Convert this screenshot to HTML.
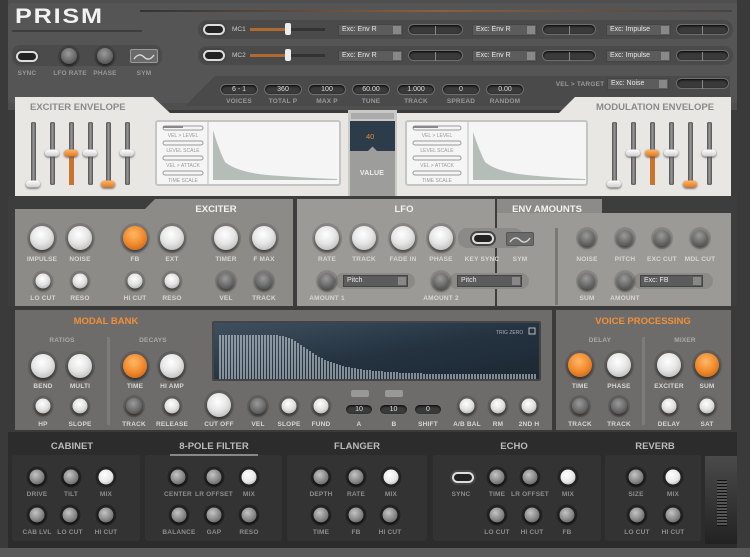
<!DOCTYPE html><html><head><meta charset="utf-8"><style>
*{margin:0;padding:0;box-sizing:border-box}
body{width:750px;height:557px;overflow:hidden;background:#3b3b3b;font-family:"Liberation Sans",sans-serif;position:relative}
div,i,b,span{position:absolute;display:block}
.k{border-radius:50%;transform:translate(-50%,-50%);box-shadow:0 0 0 3px rgba(0,0,0,.12),0 2px 3px rgba(0,0,0,.55)}
.kw{width:24px;height:24px;background:radial-gradient(circle at 45% 35%,#fff,#e6e6e6 45%,#a8a8a8 100%)}
.ko{width:24px;height:24px;background:radial-gradient(circle at 45% 35%,#ffb86a,#f28a2c 50%,#b25a12)}
.ks{width:15px;height:15px;background:radial-gradient(circle at 45% 35%,#fff,#e0e0e0 50%,#9a9a9a)}
.kd{width:16px;height:16px;background:radial-gradient(circle at 45% 35%,#9a9a9a,#6a6a6a 55%,#3e3e3e)}
.kb{width:15px;height:15px;background:radial-gradient(circle at 40% 35%,#c4c4c4,#858585 55%,#4a4a4a);box-shadow:0 0 0 3px rgba(0,0,0,.3),0 1px 2px #000}
.kbw{width:15px;height:15px;background:radial-gradient(circle at 40% 35%,#fff,#e8e8e8 55%,#999);box-shadow:0 0 0 3px rgba(0,0,0,.3)}
.l{transform:translateX(-50%);font-size:6.5px;font-weight:bold;color:#d6d6d4;white-space:nowrap;letter-spacing:.2px}
.ld{color:#8e8e8e}
.t{transform:translateX(-50%);font-size:9.5px;font-weight:bold;color:#f2f2f2;white-space:nowrap}
.or{color:#f0903a}
.pill{height:11px;border-radius:6px;background:#3a3a3a;border:1px solid #6e6e6e;box-shadow:inset 0 1px 2px #000;color:#ddd;font-size:7px;text-align:center;line-height:9px}
.dd{height:12px;background:#5c5c5c;border:1px solid #444;color:#e8e8e8;font-size:7px;line-height:10px;padding-left:3px}
.dd:after{content:"";position:absolute;right:1px;top:1px;width:8px;height:8px;background:#888}
.sync{width:22px;height:11px;border-radius:6px;background:#222;border:2px solid #ddd;box-shadow:0 0 0 2px #444}
.tr{width:5px;height:63px;background:linear-gradient(90deg,#6a6a6a,#999,#6a6a6a);border-radius:2px;box-shadow:inset 0 0 2px #333}
.h{width:14px;height:7px;border-radius:4px;background:linear-gradient(#fff,#ccc);box-shadow:0 1px 2px #555;transform:translate(-50%,-50%)}
.ho{background:linear-gradient(#ffb56a,#e07a20)}
.el{font-size:5.5px;color:#777;transform:translateX(-50%)}
</style></head><body>
<div style="left:0;top:0;width:750px;height:110px;background:#4f4f4f"></div>
<div style="left:8px;top:3px;width:730px;height:100px;background:#555;border-radius:4px"></div>
<div style="left:15px;top:5px;font-size:21px;font-weight:900;color:#f2f2f2;letter-spacing:1.5px;transform:scaleX(1.2);transform-origin:0 0">PRISM</div>
<div style="left:140px;top:10px;width:592px;height:2px;background:linear-gradient(90deg,#333,#8a6040 50%,#444)"></div>
<div style="left:12px;top:30px;width:130px;height:2px;background:#3d3d3d"></div>
<div style="left:198px;top:20px;width:535px;height:19px;background:#4a4a4a;border-radius:9px"></div>
<div style="left:198px;top:46px;width:535px;height:19px;background:#4a4a4a;border-radius:9px"></div>
<i class="sync" style="left:203px;top:24px"></i><i class="sync" style="left:203px;top:50px"></i>
<span style="left:232px;top:26px;font-size:6.5px;color:#ccc">MC1</span><span style="left:232px;top:52px;font-size:6.5px;color:#ccc">MC2</span>
<i style="left:250px;top:28px;width:75px;height:3px;background:linear-gradient(90deg,#b06a30 50%,#333 50%)"></i>
<i style="left:250px;top:54px;width:75px;height:3px;background:linear-gradient(90deg,#b06a30 50%,#333 50%)"></i>
<i style="left:285px;top:23px;width:6px;height:12px;background:#eee;border-radius:2px"></i>
<i style="left:285px;top:49px;width:6px;height:12px;background:#eee;border-radius:2px"></i>
<span class="dd" style="left:338px;top:24px;width:65px">Exc: Env R</span><span class="pill" style="left:408px;top:24px;width:55px"></span>
<span class="dd" style="left:472px;top:24px;width:65px">Exc: Env R</span><span class="pill" style="left:542px;top:24px;width:54px"></span>
<span class="dd" style="left:606px;top:24px;width:65px">Exc: Impulse</span><span class="pill" style="left:676px;top:24px;width:53px"></span>
<span class="dd" style="left:338px;top:50px;width:65px">Exc: Env R</span><span class="pill" style="left:408px;top:50px;width:55px"></span>
<span class="dd" style="left:472px;top:50px;width:65px">Exc: Env R</span><span class="pill" style="left:542px;top:50px;width:54px"></span>
<span class="dd" style="left:606px;top:50px;width:65px">Exc: Impulse</span><span class="pill" style="left:676px;top:50px;width:53px"></span>
<i style="left:435px;top:26px;width:1px;height:9px;background:#888"></i><i style="left:569px;top:26px;width:1px;height:9px;background:#888"></i><i style="left:702px;top:26px;width:1px;height:9px;background:#888"></i>
<i style="left:435px;top:52px;width:1px;height:9px;background:#888"></i><i style="left:569px;top:52px;width:1px;height:9px;background:#888"></i><i style="left:702px;top:52px;width:1px;height:9px;background:#888"></i>
<div style="left:12px;top:45px;width:150px;height:21px;background:#4b4b4b;border-radius:8px"></div>
<i class="sync" style="left:16px;top:51px"></i>
<i class="k kd" style="left:69px;top:56px"></i><i class="k kd" style="left:105px;top:56px"></i>
<i style="left:130px;top:49px;width:28px;height:14px;background:#6a6a6a;border:1px solid #999;border-radius:2px"><svg width="26" height="12"><path d="M3 8 Q8 1 13 6 Q18 11 23 4" stroke="#ddd" stroke-width="1.3" fill="none"/></svg></i>
<b class="l" style="left:27px;top:70px;color:#999">SYNC</b><b class="l" style="left:70px;top:70px;color:#999">LFO RATE</b><b class="l" style="left:105px;top:70px;color:#999">PHASE</b><b class="l" style="left:144px;top:70px;color:#999">SYM</b>
<div style="left:185px;top:76px;width:545px;height:30px;background:#4a4a4a;clip-path:polygon(30px 0,100% 0,100% 100%,0 100%)"></div>
<span class="pill" style="left:220px;top:84px;width:38px">6 - 1</span><span class="pill" style="left:264px;top:84px;width:38px">360</span><span class="pill" style="left:308px;top:84px;width:38px">100</span><span class="pill" style="left:352px;top:84px;width:38px">60.00</span><span class="pill" style="left:397px;top:84px;width:38px">1.000</span><span class="pill" style="left:442px;top:84px;width:38px">0</span><span class="pill" style="left:486px;top:84px;width:38px">0.00</span>
<b class="l" style="left:239px;top:98px;color:#999">VOICES</b><b class="l" style="left:283px;top:98px;color:#999">TOTAL P</b><b class="l" style="left:327px;top:98px;color:#999">MAX P</b><b class="l" style="left:371px;top:98px;color:#999">TUNE</b><b class="l" style="left:416px;top:98px;color:#999">TRACK</b><b class="l" style="left:461px;top:98px;color:#999">SPREAD</b><b class="l" style="left:505px;top:98px;color:#999">RANDOM</b>
<b class="l" style="left:580px;top:81px;color:#999">VEL &gt; TARGET</b>
<span class="dd" style="left:607px;top:78px;width:62px">Exc: Noise</span><span class="pill" style="left:676px;top:78px;width:53px"></span><i style="left:702px;top:80px;width:1px;height:9px;background:#888"></i>
<div style="left:0;top:0;width:8px;height:557px;background:#3a3a3a"></div>
<div style="left:737px;top:0;width:13px;height:557px;background:#3a3a3a"></div>
<div style="left:15px;top:97px;width:333px;height:112px;background:#e8e7e4;clip-path:polygon(0 0,138px 0,155px 16px,100% 16px,100% 100px,142px 100px,130px 112px,0 112px)"></div>
<div style="left:30px;top:102px;font-size:9.5px;font-weight:bold;color:#8a8a8a">EXCITER ENVELOPE</div>
<i class="tr" style="left:31px;top:122px"></i><i class="tr" style="left:50px;top:122px"></i><i class="tr" style="left:69px;top:122px"></i><i class="tr" style="left:88px;top:122px"></i><i class="tr" style="left:106px;top:122px"></i><i class="tr" style="left:125px;top:122px"></i>
<i style="left:69px;top:154px;width:5px;height:31px;background:#c8742c"></i><i style="left:106px;top:182px;width:5px;height:3px;background:#c8742c"></i>
<i class="h" style="left:33px;top:184px"></i><i class="h" style="left:52px;top:153px"></i><i class="h ho" style="left:71px;top:153px"></i><i class="h" style="left:90px;top:153px"></i><i class="h ho" style="left:108px;top:184px"></i><i class="h" style="left:127px;top:153px"></i>
<span class="el" style="left:33px;top:197px">A</span><span class="el" style="left:52px;top:197px">D1</span><span class="el" style="left:71px;top:197px">B</span><span class="el" style="left:90px;top:197px">D2</span><span class="el" style="left:108px;top:197px">S</span><span class="el" style="left:127px;top:197px">R</span>
<div style="left:155px;top:120px;width:186px;height:66px;background:#f4f5f4;border:2px solid #c4c6c4;border-radius:3px">
<svg width="182" height="62" style="position:absolute;left:0;top:0"><line x1="51" y1="0" x2="51" y2="62" stroke="#bbb"/><path d="M56 58 L56 8 Q62 28 68 40 Q80 50 110 53 Q150 56 180 57 L180 58Z" fill="#b5bdb9"/>
<g fill="none" stroke="#999"><rect x="6" y="4" width="40" height="4" rx="2"/><rect x="6" y="19" width="40" height="4" rx="2"/><rect x="6" y="34" width="40" height="4" rx="2"/><rect x="6" y="49" width="40" height="4" rx="2"/></g><rect x="6" y="4" width="20" height="2" fill="#888"/>
<g font-size="5" fill="#999" text-anchor="middle" font-family="Liberation Sans"><text x="26" y="15">VEL &gt; LEVEL</text><text x="26" y="30">LEVEL SCALE</text><text x="26" y="45">VEL &gt; ATTACK</text><text x="26" y="60">TIME SCALE</text></g></svg></div>
<div style="left:348px;top:110px;width:49px;height:88px;background:#c9c9c6"></div>
<div style="left:351px;top:113px;width:43px;height:6px;background:#aaa"></div>
<div style="left:350px;top:121px;width:45px;height:75px;background:#9d9d9b"></div>
<div style="left:350px;top:121px;width:45px;height:30px;background:#2d3c4a;clip-path:polygon(0 0,100% 0,100% 100%,60% 100%,50% 85%,40% 100%,0 100%)"></div>
<span style="left:366px;top:132px;font-size:7.5px;color:#e08a3a">40</span>
<b class="l" style="left:372px;top:170px;color:#eee;font-size:7px">VALUE</b>
<div style="left:397px;top:97px;width:334px;height:112px;background:#e8e7e4;clip-path:polygon(0 16px,162px 16px,178px 0,100% 0,100% 112px,205px 112px,195px 100px,0 100px)"></div>
<div style="left:596px;top:102px;font-size:9.5px;font-weight:bold;color:#8a8a8a">MODULATION ENVELOPE</div>
<div style="left:405px;top:120px;width:183px;height:66px;background:#f4f5f4;border:2px solid #c4c6c4;border-radius:3px">
<svg width="179" height="62" style="position:absolute;left:0;top:0"><line x1="61" y1="0" x2="61" y2="62" stroke="#bbb"/><path d="M66 58 L66 10 Q72 28 78 40 Q90 50 120 53 Q150 56 178 57 L178 58Z" fill="#b5bdb9"/>
<g fill="none" stroke="#999"><rect x="6" y="4" width="48" height="4" rx="2"/><rect x="6" y="19" width="48" height="4" rx="2"/><rect x="6" y="34" width="48" height="4" rx="2"/><rect x="6" y="49" width="48" height="4" rx="2"/></g><rect x="6" y="4" width="25" height="2" fill="#888"/>
<g font-size="5" fill="#999" text-anchor="middle" font-family="Liberation Sans"><text x="30" y="15">VEL &gt; LEVEL</text><text x="30" y="30">LEVEL SCALE</text><text x="30" y="45">VEL &gt; ATTACK</text><text x="30" y="60">TIME SCALE</text></g></svg></div>
<i class="tr" style="left:612px;top:122px"></i><i class="tr" style="left:631px;top:122px"></i><i class="tr" style="left:650px;top:122px"></i><i class="tr" style="left:669px;top:122px"></i><i class="tr" style="left:688px;top:122px"></i><i class="tr" style="left:707px;top:122px"></i>
<i style="left:650px;top:154px;width:5px;height:31px;background:#c8742c"></i>
<i class="h" style="left:614px;top:184px"></i><i class="h" style="left:633px;top:153px"></i><i class="h ho" style="left:652px;top:153px"></i><i class="h" style="left:671px;top:153px"></i><i class="h ho" style="left:690px;top:184px"></i><i class="h" style="left:709px;top:153px"></i>
<span class="el" style="left:614px;top:197px">A</span><span class="el" style="left:633px;top:197px">D1</span><span class="el" style="left:652px;top:197px">B</span><span class="el" style="left:671px;top:197px">D2</span><span class="el" style="left:690px;top:197px">S</span><span class="el" style="left:709px;top:197px">R</span>
<div style="left:8px;top:196px;width:729px;height:112px;background:#3d3d3d"></div>
<div style="left:15px;top:199px;width:278px;height:107px;background:#8d8b87;clip-path:polygon(140px 0,100% 0,100% 100%,0 100%,0 10px,130px 10px)"></div>
<div style="left:297px;top:199px;width:198px;height:107px;background:#9c9a96"></div>
<div style="left:497px;top:199px;width:105px;height:20px;background:#8d8b87"></div>
<div style="left:497px;top:213px;width:234px;height:93px;background:#9c9a96"></div>
<b class="t" style="left:216px;top:204px">EXCITER</b><b class="t" style="left:404px;top:204px">LFO</b><b class="t" style="left:547px;top:204px">ENV AMOUNTS</b>
<i style="left:555px;top:228px;width:3px;height:77px;background:#7a7874"></i>
<i class="k kw" style="left:42px;top:238px"></i><i class="k kw" style="left:80px;top:238px"></i><i class="k ko" style="left:135px;top:238px"></i><i class="k kw" style="left:172px;top:238px"></i><i class="k kw" style="left:226px;top:238px"></i><i class="k kw" style="left:264px;top:238px"></i>
<b class="l" style="left:42px;top:256px">IMPULSE</b><b class="l" style="left:80px;top:256px">NOISE</b><b class="l" style="left:135px;top:256px">FB</b><b class="l" style="left:172px;top:256px">EXT</b><b class="l" style="left:226px;top:256px">TIMER</b><b class="l" style="left:264px;top:256px">F MAX</b>
<i class="k ks" style="left:43px;top:281px"></i><i class="k ks" style="left:80px;top:281px"></i><i class="k ks" style="left:135px;top:281px"></i><i class="k ks" style="left:172px;top:281px"></i><i class="k kd" style="left:226px;top:281px"></i><i class="k kd" style="left:264px;top:281px"></i>
<b class="l" style="left:43px;top:295px">LO CUT</b><b class="l" style="left:80px;top:295px">RESO</b><b class="l" style="left:135px;top:295px">HI CUT</b><b class="l" style="left:172px;top:295px">RESO</b><b class="l" style="left:226px;top:295px">VEL</b><b class="l" style="left:264px;top:295px">TRACK</b>
<i class="k kw" style="left:327px;top:238px"></i><i class="k kw" style="left:364px;top:238px"></i><i class="k kw" style="left:403px;top:238px"></i><i class="k kw" style="left:441px;top:238px"></i>
<i style="left:458px;top:228px;width:65px;height:20px;background:#8c8a86;border-radius:9px"></i>
<i class="sync" style="left:472px;top:233px"></i>
<i style="left:506px;top:232px;width:28px;height:14px;background:#6a6a6a;border:1px solid #555;border-radius:2px"><svg width="26" height="12"><path d="M3 8 Q8 1 13 6 Q18 11 23 4" stroke="#ddd" stroke-width="1.3" fill="none"/></svg></i>
<b class="l" style="left:327px;top:256px">RATE</b><b class="l" style="left:364px;top:256px">TRACK</b><b class="l" style="left:403px;top:256px">FADE IN</b><b class="l" style="left:441px;top:256px">PHASE</b><b class="l" style="left:482px;top:256px">KEY SYNC</b><b class="l" style="left:520px;top:256px">SYM</b>
<i style="left:335px;top:273px;width:80px;height:16px;background:#8c8a86;border-radius:8px"></i><i style="left:449px;top:273px;width:80px;height:16px;background:#8c8a86;border-radius:8px"></i>
<i class="k kd" style="left:327px;top:281px"></i><i class="k kd" style="left:441px;top:281px"></i>
<span class="dd" style="left:343px;top:275px;width:65px">Pitch</span><span class="dd" style="left:457px;top:275px;width:65px">Pitch</span>
<b class="l" style="left:327px;top:295px">AMOUNT 1</b><b class="l" style="left:441px;top:295px">AMOUNT 2</b>
<i class="k kd" style="left:587px;top:238px"></i><i class="k kd" style="left:625px;top:238px"></i><i class="k kd" style="left:662px;top:238px"></i><i class="k kd" style="left:700px;top:238px"></i>
<b class="l" style="left:587px;top:256px">NOISE</b><b class="l" style="left:625px;top:256px">PITCH</b><b class="l" style="left:662px;top:256px">EXC CUT</b><b class="l" style="left:700px;top:256px">MDL CUT</b>
<i style="left:633px;top:273px;width:80px;height:16px;background:#8c8a86;border-radius:8px"></i>
<i class="k kd" style="left:587px;top:281px"></i><i class="k kd" style="left:625px;top:281px"></i>
<span class="dd" style="left:640px;top:275px;width:63px">Exc: FB</span>
<b class="l" style="left:587px;top:295px">SUM</b><b class="l" style="left:625px;top:295px">AMOUNT</b>
<div style="left:8px;top:306px;width:729px;height:128px;background:#3a3a3a"></div>
<div style="left:15px;top:310px;width:537px;height:120px;background:#6d6c6a"></div>
<div style="left:556px;top:310px;width:175px;height:120px;background:#6d6c6a"></div>
<b class="t or" style="left:106px;top:316px">MODAL BANK</b><b class="t or" style="left:643px;top:316px">VOICE PROCESSING</b>
<b class="l" style="left:62px;top:337px;color:#aaa">RATIOS</b><b class="l" style="left:153px;top:337px;color:#aaa">DECAYS</b><b class="l" style="left:600px;top:337px;color:#aaa">DELAY</b><b class="l" style="left:685px;top:337px;color:#aaa">MIXER</b>
<i style="left:107px;top:337px;width:3px;height:88px;background:#7d7c7a"></i><i style="left:642px;top:337px;width:3px;height:88px;background:#7d7c7a"></i>
<div style="left:212px;top:321px;width:329px;height:60px;background:linear-gradient(170deg,#3e505f,#243240 55%,#1c2833);border:2px solid #444;border-radius:2px;overflow:hidden">
<svg width="329" height="60" style="position:absolute;left:0;top:0"><g stroke="#e6ecef" stroke-width="1">
<path d="M6 58V12M9 58V12M12 58V12M15 58V12M18 58V12M21 58V12M24 58V12M27 58V12M30 58V12M33 58V12M36 58V12M39 58V12M42 58V12M45 58V12M48 58V12M51 58V12M54 58V12M57 58V12M60 58V12M63 58V12M66 58V13M69 58V13M72 58V14M75 58V15M78 58V16M81 58V18M84 58V20M87 58V22M90 58V24M93 58V26M96 58V28M99 58V30M102 58V32M105 58V34M108 58V35M111 58V37M114 58V38M117 58V39M120 58V40M123 58V41M126 58V42M129 58V43M132 58V44M135 58V44M138 58V45M141 58V45M144 58V46M147 58V46M150 58V47M153 58V47M156 58V47M159 58V48M162 58V48M165 58V48M168 58V48M171 58V49M174 58V49M177 58V49M180 58V49M183 58V49M186 58V50M189 58V50M192 58V50M195 58V50M198 58V50M201 58V50M204 58V50M207 58V50M210 58V51M213 58V51M216 58V51M219 58V51M222 58V51M225 58V51M228 58V51M231 58V51M234 58V51M237 58V51M240 58V51M243 58V51M246 58V51M249 58V51M252 58V51M255 58V51M258 58V51M261 58V51M264 58V51M267 58V51M270 58V51M273 58V51M276 58V51M279 58V51M282 58V51M285 58V51M288 58V51M291 58V51M294 58V51M297 58V51M300 58V51M303 58V51M306 58V51M309 58V51M312 58V51M315 58V51M318 58V51M321 58V51"/></g>
<text x="282" y="11" font-size="5" fill="#aab" font-family="Liberation Sans">TRIG ZERO</text><rect x="315" y="5" width="6" height="6" fill="none" stroke="#bbb"/></svg></div>
<i class="k kw" style="left:43px;top:366px"></i><i class="k kw" style="left:80px;top:366px"></i><i class="k ko" style="left:135px;top:366px"></i><i class="k kw" style="left:172px;top:366px"></i>
<b class="l" style="left:43px;top:383px">BEND</b><b class="l" style="left:80px;top:383px">MULTI</b><b class="l" style="left:135px;top:383px">TIME</b><b class="l" style="left:172px;top:383px">HI AMP</b>
<i class="k ks" style="left:43px;top:406px"></i><i class="k ks" style="left:80px;top:406px"></i><i class="k kd" style="left:134px;top:406px"></i><i class="k ks" style="left:172px;top:406px"></i><i class="k kw" style="left:219px;top:405px"></i><i class="k kd" style="left:258px;top:406px"></i><i class="k ks" style="left:289px;top:406px"></i><i class="k ks" style="left:321px;top:406px"></i>
<b class="l" style="left:43px;top:421px">HP</b><b class="l" style="left:80px;top:421px">SLOPE</b><b class="l" style="left:134px;top:421px">TRACK</b><b class="l" style="left:172px;top:421px">RELEASE</b><b class="l" style="left:219px;top:421px">CUT OFF</b><b class="l" style="left:258px;top:421px">VEL</b><b class="l" style="left:289px;top:421px">SLOPE</b><b class="l" style="left:321px;top:421px">FUND</b>
<i style="left:351px;top:390px;width:18px;height:7px;background:#999;border-radius:2px"></i><i style="left:385px;top:390px;width:18px;height:7px;background:#999;border-radius:2px"></i>
<span class="pill" style="left:345px;top:404px;width:28px">10</span><span class="pill" style="left:379px;top:404px;width:29px">10</span><span class="pill" style="left:414px;top:404px;width:28px">0</span>
<b class="l" style="left:359px;top:421px">A</b><b class="l" style="left:394px;top:421px">B</b><b class="l" style="left:428px;top:421px">SHIFT</b>
<i class="k ks" style="left:467px;top:406px"></i><i class="k ks" style="left:498px;top:406px"></i><i class="k ks" style="left:529px;top:406px"></i>
<b class="l" style="left:467px;top:421px">A/B BAL</b><b class="l" style="left:498px;top:421px">RM</b><b class="l" style="left:529px;top:421px">2ND H</b>
<i class="k ko" style="left:580px;top:365px"></i><i class="k kw" style="left:619px;top:365px"></i><i class="k kw" style="left:669px;top:365px"></i><i class="k ko" style="left:707px;top:365px"></i>
<b class="l" style="left:580px;top:383px">TIME</b><b class="l" style="left:619px;top:383px">PHASE</b><b class="l" style="left:669px;top:383px">EXCITER</b><b class="l" style="left:707px;top:383px">SUM</b>
<i class="k kd" style="left:580px;top:406px"></i><i class="k kd" style="left:619px;top:406px"></i><i class="k ks" style="left:669px;top:406px"></i><i class="k ks" style="left:707px;top:406px"></i>
<b class="l" style="left:580px;top:421px">TRACK</b><b class="l" style="left:619px;top:421px">TRACK</b><b class="l" style="left:669px;top:421px">DELAY</b><b class="l" style="left:707px;top:421px">SAT</b>
<div style="left:8px;top:432px;width:729px;height:116px;background:#2c2c2c"></div>
<div style="left:12px;top:455px;width:128px;height:86px;background:#333;border-radius:3px"></div>
<div style="left:145px;top:455px;width:137px;height:86px;background:#333;border-radius:3px"></div>
<div style="left:287px;top:455px;width:140px;height:86px;background:#333;border-radius:3px"></div>
<div style="left:433px;top:455px;width:168px;height:86px;background:#333;border-radius:3px"></div>
<div style="left:605px;top:455px;width:96px;height:86px;background:#333;border-radius:3px"></div>
<div style="left:705px;top:456px;width:32px;height:88px;background:linear-gradient(#4a4a4a,#222)"></div>
<div style="left:717px;top:480px;width:10px;height:46px;background:repeating-linear-gradient(#111 0 1px,#555 1px 3px)"></div>
<b class="t" style="left:72px;top:441px;color:#bbb">CABINET</b><b class="t" style="left:214px;top:441px;color:#bbb">8-POLE FILTER</b><b class="t" style="left:357px;top:441px;color:#bbb">FLANGER</b><b class="t" style="left:514px;top:441px;color:#bbb">ECHO</b><b class="t" style="left:655px;top:441px;color:#bbb">REVERB</b>
<i style="left:170px;top:454px;width:88px;height:2px;background:#888"></i>
<i class="k kb" style="left:37px;top:477px"></i><i class="k kb" style="left:71px;top:477px"></i><i class="k kbw" style="left:106px;top:477px"></i>
<i class="k kb" style="left:37px;top:515px"></i><i class="k kb" style="left:70px;top:515px"></i><i class="k kb" style="left:106px;top:515px"></i>
<i class="k kb" style="left:178px;top:477px"></i><i class="k kb" style="left:214px;top:477px"></i><i class="k kbw" style="left:249px;top:477px"></i>
<i class="k kb" style="left:179px;top:515px"></i><i class="k kb" style="left:214px;top:515px"></i><i class="k kb" style="left:249px;top:515px"></i>
<i class="k kb" style="left:321px;top:477px"></i><i class="k kb" style="left:356px;top:477px"></i><i class="k kbw" style="left:391px;top:477px"></i>
<i class="k kb" style="left:321px;top:515px"></i><i class="k kb" style="left:356px;top:515px"></i><i class="k kb" style="left:390px;top:515px"></i>
<i class="sync" style="left:452px;top:472px"></i>
<i class="k kb" style="left:497px;top:477px"></i><i class="k kb" style="left:530px;top:477px"></i><i class="k kbw" style="left:568px;top:477px"></i>
<i class="k kb" style="left:497px;top:515px"></i><i class="k kb" style="left:532px;top:515px"></i><i class="k kb" style="left:567px;top:515px"></i>
<i class="k kb" style="left:636px;top:477px"></i><i class="k kbw" style="left:673px;top:477px"></i>
<i class="k kb" style="left:637px;top:515px"></i><i class="k kb" style="left:673px;top:515px"></i>
<b class="l ld" style="left:37px;top:491px">DRIVE</b><b class="l ld" style="left:71px;top:491px">TILT</b><b class="l ld" style="left:106px;top:491px">MIX</b>
<b class="l ld" style="left:37px;top:529px">CAB LVL</b><b class="l ld" style="left:70px;top:529px">LO CUT</b><b class="l ld" style="left:106px;top:529px">HI CUT</b>
<b class="l ld" style="left:178px;top:491px">CENTER</b><b class="l ld" style="left:214px;top:491px">LR OFFSET</b><b class="l ld" style="left:249px;top:491px">MIX</b>
<b class="l ld" style="left:179px;top:529px">BALANCE</b><b class="l ld" style="left:214px;top:529px">GAP</b><b class="l ld" style="left:249px;top:529px">RESO</b>
<b class="l ld" style="left:321px;top:491px">DEPTH</b><b class="l ld" style="left:356px;top:491px">RATE</b><b class="l ld" style="left:391px;top:491px">MIX</b>
<b class="l ld" style="left:321px;top:529px">TIME</b><b class="l ld" style="left:356px;top:529px">FB</b><b class="l ld" style="left:390px;top:529px">HI CUT</b>
<b class="l ld" style="left:461px;top:491px">SYNC</b><b class="l ld" style="left:497px;top:491px">TIME</b><b class="l ld" style="left:530px;top:491px">LR OFFSET</b><b class="l ld" style="left:568px;top:491px">MIX</b>
<b class="l ld" style="left:497px;top:529px">LO CUT</b><b class="l ld" style="left:532px;top:529px">HI CUT</b><b class="l ld" style="left:567px;top:529px">FB</b>
<b class="l ld" style="left:636px;top:491px">SIZE</b><b class="l ld" style="left:673px;top:491px">MIX</b><b class="l ld" style="left:637px;top:529px">LO CUT</b><b class="l ld" style="left:673px;top:529px">HI CUT</b>
<div style="left:0;top:548px;width:750px;height:9px;background:#5a5a5a"></div>
</body></html>
